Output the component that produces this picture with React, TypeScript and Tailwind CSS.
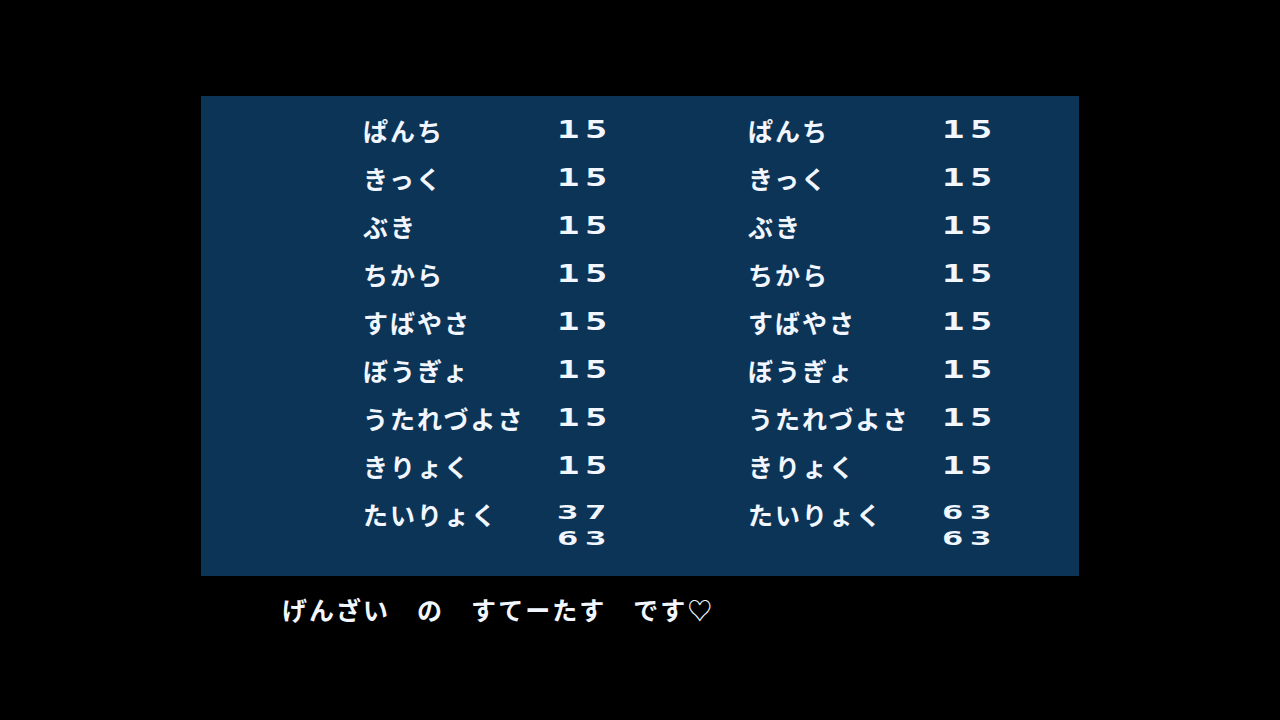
import React from 'react';

type Stat = { label: string; value: string[] };

const left: Stat[] = [
  { label: 'ぱんち', value: ['15'] },
  { label: 'きっく', value: ['15'] },
  { label: 'ぶき', value: ['15'] },
  { label: 'ちから', value: ['15'] },
  { label: 'すばやさ', value: ['15'] },
  { label: 'ぼうぎょ', value: ['15'] },
  { label: 'うたれづよさ', value: ['15'] },
  { label: 'きりょく', value: ['15'] },
  { label: 'たいりょく', value: ['37', '63'] },
];

const right: Stat[] = left.map((s, i) => (i === left.length - 1 ? { ...s, value: ['63', '63'] } : s));

const Digits: React.FC<{ value: string; small?: boolean }> = ({ value, small }) => (
  <div className="flex">
    {value.split('').map((d, i) => (
      <span key={i} className="w-[28px] text-center">
        <span
          className={
            small
              ? 'inline-block [transform:scaleX(1.9)] text-[19px] font-bold'
              : 'inline-block [transform:scaleX(1.55)] text-[24px] font-bold'
          }
        >
          {d}
        </span>
      </span>
    ))}
  </div>
);

const StatColumn: React.FC<{ stats: Stat[] }> = ({ stats }) => (
  <div className="flex flex-col">
    {stats.map((s, i) => (
      <div key={i} className="flex items-start h-[48px]">
        <span className="w-[191px] leading-[48px] text-[25px] font-bold tracking-[2px]">{s.label}</span>
        {s.value.length === 1 ? (
          <div className="leading-[48px] font-['DejaVu_Sans_Mono',monospace]">
            <Digits value={s.value[0]} />
          </div>
        ) : (
          <div className="pt-[10px] leading-[25px] font-['DejaVu_Sans_Mono',monospace]">
            {s.value.map((v, j) => (
              <Digits key={j} value={v} small />
            ))}
          </div>
        )}
      </div>
    ))}
  </div>
);

export default function App() {
  return (
    <div className="w-full h-screen bg-black text-[#f2f6ff] font-['Noto_Sans_CJK_JP',sans-serif] overflow-hidden">
      <div className="pt-[96px] w-[878px] mx-auto">
        <section className="h-[480px] bg-[#0b3457] pt-[10px] pl-[162px] grid grid-cols-[385px_385px]">
          <StatColumn stats={left} />
          <StatColumn stats={right} />
        </section>
        <p className="mt-[9px] pl-[81px] leading-[48px] text-[25px] font-bold tracking-[2px]">
          げんざい　の　すてーたす　です♡
        </p>
      </div>
    </div>
  );
}
